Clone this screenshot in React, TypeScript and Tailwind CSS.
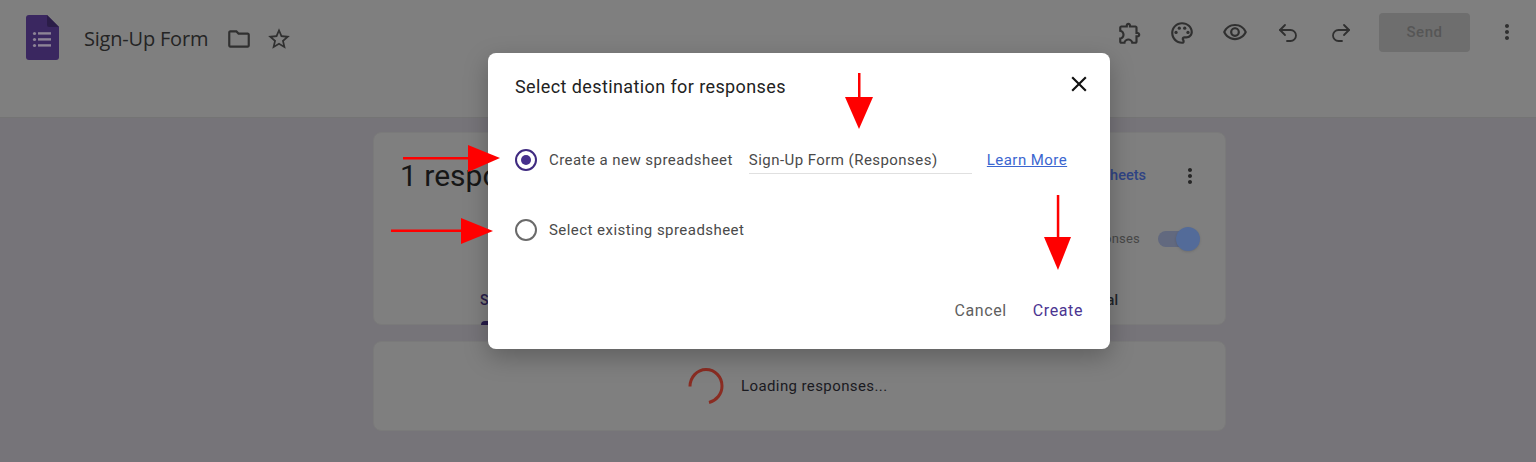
import { MdClose, MdMoreVert, MdOutlineFolder, MdOutlinePalette, MdOutlineRemoveRedEye, MdStarBorder } from "react-icons/md";
import { Redo2, Undo2 } from "lucide-react";

function FormsLogo() {
  return (
    <svg width="33" height="45" viewBox="0 0 33 45" className="shrink-0">
      <path d="M3 0H21L33 12V42a3 3 0 0 1-3 3H3a3 3 0 0 1-3-3V3a3 3 0 0 1 3-3z" fill="#3a2760" />
      <path d="M21 0L33 12H23a2 2 0 0 1-2-2z" fill="#2b1d48" />
      <g fill="#8d8496">
        <circle cx="8.5" cy="18.500" r="1.600" />
        <circle cx="8.5" cy="24.500" r="1.600" />
        <circle cx="8.5" cy="30.500" r="1.600" />
        <rect x="12" y="17.200" width="13" height="2.400" />
        <rect x="12" y="23.200" width="13" height="2.400" />
        <rect x="12" y="29.200" width="13" height="2.400" />
      </g>
    </svg>
  );
}

function PuzzleIcon() {
  return (
    <svg width="26" height="26" viewBox="0 0 24 24" fill="#303030">
      <path d="M10.5 4.5c.28 0 .5.22.5.5v2h6v6h2c.28 0 .5.22.5.5s-.22.5-.5.5h-2v6h-2.120c-.68-1.750-2.390-3-4.380-3s-3.700 1.250-4.380 3H4v-2.120c1.750-.68 3-2.390 3-4.380 0-1.990-1.240-3.700-2.990-4.380L4 7h6V5c0-.28.22-.5.5-.5m0-2C9.120 2.500 8 3.620 8 5H4c-1.100 0-1.990.9-1.990 2v3.800h.29c1.490 0 2.700 1.210 2.700 2.700s-1.210 2.700-2.700 2.700H2V20c0 1.100.9 2 2 2h3.800v-.3c0-1.490 1.210-2.700 2.700-2.700s2.700 1.210 2.700 2.700v.3H17c1.100 0 2-.9 2-2v-4c1.380 0 2.500-1.120 2.500-2.500S20.380 11 19 11V7c0-1.100-.9-2-2-2h-4c0-1.380-1.120-2.500-2.500-2.500z" />
    </svg>
  );
}

function Spinner() {
  return (
    <svg width="36" height="38" viewBox="0 0 36 38" fill="none" className="shrink-0">
      <path d="M2 19.500C2 10.500 9 2.500 18 2.500s16 7.500 16 16.500c0 8-5.500 14.500-13 16.500" stroke="#8a2c22" strokeWidth="3" />
    </svg>
  );
}

function Arrows() {
  return (
    <svg className="absolute inset-0 h-full w-full pointer-events-none" viewBox="0 0 1536 462">
      <g fill="#ff0000">
        <rect x="403" y="157" width="70" height="2.500" />
        <polygon points="468,145 500,158 468,172" />
        <rect x="391" y="229.500" width="72" height="2.500" />
        <polygon points="461,218 493,231 461,244" />
        <rect x="858" y="73" width="2.500" height="26" />
        <polygon points="845,97 873,97 859,129" />
        <rect x="1056.800" y="195" width="2.500" height="44" />
        <polygon points="1044,237 1071,237 1058,270" />
      </g>
    </svg>
  );
}

export default function App() {
  return (
    <div className="relative h-[462px] w-[1536px] overflow-hidden bg-[#767479] font-['Roboto',sans-serif]">
      <header className="flex h-[118px] items-start border-b border-[#747474] bg-[#7f7f7f] pl-[26px] pr-[17px]">
        <div className="mt-[15px]">
          <FormsLogo />
        </div>
        <span className="ml-[25px] mt-[25px] text-[20px] leading-[28px] text-[#242424] font-['Open_Sans',sans-serif] tracking-[-0.2px]">Sign-Up Form</span>
        <MdOutlineFolder className="ml-[18px] mt-[26px] text-[#303030]" size={26} />
        <MdStarBorder className="ml-[14px] mt-[26px] text-[#303030]" size={26} />
        <div className="ml-auto mt-[13px] flex items-start">
          <div className="mr-[26px] mt-[7px]"><PuzzleIcon /></div>
          <MdOutlinePalette className="mr-[27px] mt-[7px] text-[#303030]" size={26} />
          <MdOutlineRemoveRedEye className="mr-[28px] mt-[6px] text-[#303030]" size={26} />
          <Undo2 className="mr-[29px] mt-[8px] text-[#303030]" size={24} strokeWidth={1.800} />
          <Redo2 className="mr-[26px] mt-[8px] text-[#303030]" size={24} strokeWidth={1.800} />
          <div className="flex h-[39px] w-[91px] items-center justify-center rounded bg-[#6e6e6e] text-[15px] font-medium tracking-[0.5px] text-[#565656]">Send</div>
          <MdMoreVert className="ml-[25px] mt-[7px] text-[#303030]" size={24} />
        </div>
      </header>

      <main className="ml-[373px] flex w-[853px] flex-col gap-[16px] pt-[14px]">
        <section className="flex h-[193px] flex-col rounded-lg border border-[#7a7a7a] bg-[#7f7f7f] pl-[26px] pr-[23px]">
          <div className="mt-[23px] flex items-center justify-between">
            <span className="text-[30px] leading-[40px] text-[#161616]">1 responses</span>
            <div className="flex items-center">
              <span className="text-[14.500px] font-medium text-[#2f4484]">Link to Sheets</span>
              <MdMoreVert className="ml-[32px] text-[#262626]" size={24} />
            </div>
          </div>
          <div className="mt-[33px] flex items-center justify-end">
            <span className="text-[13px] tracking-[0.2px] text-[#474747]">Accepting responses</span>
            <div className="relative ml-[18px] mr-[6px] h-[16px] w-[38px] rounded-full bg-[#62697f]">
              <span className="absolute right-[-4px] top-[-4px] h-[24px] w-[24px] rounded-full bg-[#536b99] shadow"></span>
            </div>
          </div>
          <div className="mt-[41px] flex justify-between pl-[80px] pr-[84px] text-[14px] font-medium text-[#212329]">
            <span className="relative text-[#261b49]">
              Summary
              <span className="absolute left-[1px] top-[31px] h-[4px] w-[60px] rounded-t bg-[#261b49]"></span>
            </span>
            <span>Question</span>
            <span>Individual</span>
          </div>
        </section>
        <section className="flex h-[90px] items-center gap-[17px] rounded-lg border border-[#7a7a7a] bg-[#7f7f7f] pl-[314px]">
          <Spinner />
          <span className="text-[15px] tracking-[0.4px] text-[#1a1a1f]">Loading responses...</span>
        </section>
      </main>

      <div className="absolute left-[488px] top-[53px] flex h-[296px] w-[622px] flex-col rounded-lg bg-white shadow-[0_8px_24px_rgba(0,0,0,0.25)]">
        <div className="flex items-start justify-between pl-[27px] pr-[18px] pt-[20px]">
          <span className="text-[18px] leading-[28px] tracking-[0.4px] text-[#222]">Select destination for responses</span>
          <MdClose className="mt-[-2px] text-[#111]" size={26} />
        </div>
        <div className="mt-[45px] flex items-center pl-[27px]">
          <span className="flex h-[22px] w-[22px] items-center justify-center rounded-full border-2 border-[#3f2a80]">
            <span className="h-[10px] w-[10px] rounded-full bg-[#46308c]"></span>
          </span>
          <span className="ml-[12px] text-[15px] tracking-[0.45px] text-[#4a4a4a]">Create a new spreadsheet</span>
          <span className="ml-[16px] flex h-[28px] w-[223px] items-center border-b border-[#e0e0e0] pt-[2px] text-[15px] tracking-[0.45px] text-[#4a4a4a]">Sign-Up Form (Responses)</span>
          <a className="ml-[15px] text-[15px] tracking-[0.45px] text-[#3b66d0] underline">Learn More</a>
        </div>
        <div className="mt-[45px] flex items-center pl-[27px]">
          <span className="h-[22px] w-[22px] rounded-full border-2 border-[#6a6a6a]"></span>
          <span className="ml-[12px] text-[15px] tracking-[0.45px] text-[#4a4a4a]">Select existing spreadsheet</span>
        </div>
        <div className="mt-auto flex justify-end gap-[26px] pb-[26px] pr-[27px] text-[16px] tracking-[0.6px]">
          <span className="text-[#5f5f5f]">Cancel</span>
          <span className="text-[#4b3591]">Create</span>
        </div>
      </div>

      <Arrows />
    </div>
  );
}
